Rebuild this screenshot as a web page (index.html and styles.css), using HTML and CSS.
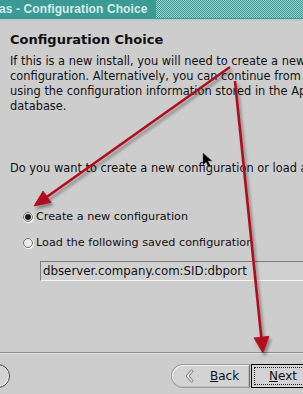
FILE: index.html
```html
<!DOCTYPE html>
<html>
<head>
<meta charset="utf-8">
<link rel="stylesheet" href="styles.css">
</head>
<body>
<div class="window">
  <div class="titlebar">
    <span class="title">as - Configuration Choice</span>
    <span class="grip"></span>
  </div>
  <div class="content">
    <h1 class="heading">Configuration Choice</h1>
    <p class="intro">If this is a new install, you will need to create a new<br>configuration. Alternatively, you can continue from a<br>using the configuration information stored in the Ap<br>database.</p>
    <p class="question">Do you want to create a new configuration or load a</p>
    <div class="options">
      <div class="option"><span class="radio checked"></span>Create a new configuration</div>
      <div class="option"><span class="radio"></span>Load the following saved configuration</div>
    </div>
    <div class="field">dbserver.company.com:SID:dbport</div>
  </div>
  <div class="footer">
    <div class="btn btn-left"></div>
    <div class="spacer"></div>
    <div class="btn btn-back">
      <svg class="chev" width="9" height="14" viewBox="0 0 9 14"><path d="M6.5 0.8 L8.2 2.2 L4.2 7 L8.2 11.8 L6.5 13.2 L1 7 Z" fill="#e6e6e6" stroke="#7a7a7a" stroke-width="1" stroke-linejoin="round"/></svg>
      <span class="label"><u>B</u>ack</span>
    </div>
    <div class="btn btn-next"><span class="focus"><span class="label"><u>N</u>ext</span></span></div>
  </div>
  <svg class="overlay" width="303" height="394" viewBox="0 0 303 394">
    <defs>
      <filter id="sh" x="-20%" y="-20%" width="140%" height="140%">
        <feDropShadow dx="2" dy="3" stdDeviation="1.6" flood-color="#000" flood-opacity="0.35"/>
      </filter>
    </defs>
    <g filter="url(#sh)" fill="#b2101c" stroke="#b2101c">
      <line x1="230" y1="67" x2="46" y2="197.5" stroke-width="2.6"/>
      <polygon points="34,206 51.1,202.4 43,191" stroke-width="0.8"/>
      <line x1="235" y1="81" x2="261.4" y2="338" stroke-width="2.6"/>
      <polygon points="263,353 269,336.3 254,337.9" stroke-width="0.8"/>
    </g>
    <path d="M203 153 L203 165 L206 162 L208.5 167 L210.5 166 L208 161 L212 161 Z" fill="#000" stroke="#555" stroke-width="0.4"/>
  </svg>
</div>
</body>
</html>
```
FILE: styles.css
```css
html, body {
  margin: 0;
  padding: 0;
}
body {
  width: 303px;
  height: 394px;
  overflow: hidden;
  background: #cdcdcd;
  font-family: "DejaVu Sans", sans-serif;
}
.window {
  position: relative;
  width: 303px;
  height: 394px;
  overflow: hidden;
  display: flex;
  flex-direction: column;
  background: #cdcdcd;
}
.titlebar {
  height: 19px;
  background: #3c9a95;
  display: flex;
  align-items: stretch;
  border-bottom: 2px solid #b9c9c8;
  flex-shrink: 0;
}
.title {
  font-family: "Liberation Sans", sans-serif;
  font-weight: bold;
  font-size: 12px;
  line-height: 19px;
  color: #d4ecea;
  white-space: nowrap;
  margin-left: -1px;
  letter-spacing: 0.1px;
}
.grip {
  flex: 1;
  margin: 0 0 1px 8px;
  background: repeating-conic-gradient(#9fd0cc 0 25%, #3c9a95 0 50%) 0 0 / 2px 2px;
}
.content {
  flex: 1;
  padding: 11px 0 0 10px;
  white-space: nowrap;
  color: #111;
  font-size: 11.4px;
}
.heading {
  margin: 0;
  font-size: 13px;
  line-height: 16px;
  font-weight: bold;
  color: #111;
}
.intro {
  margin: 6px 0 0;
  line-height: 15px;
}
.question {
  margin: 47px 0 0;
  line-height: 15px;
}
.options {
  margin-top: 33px;
  padding-left: 13px;
  display: flex;
  flex-direction: column;
  gap: 11px;
  font-size: 11.2px;
}
.option {
  display: flex;
  align-items: center;
  height: 15px;
  line-height: 15px;
}
.radio {
  width: 10px;
  height: 10px;
  border-radius: 50%;
  box-sizing: border-box;
  border: 1px solid #6a6a6a;
  background: #ececec;
  box-shadow: 0.5px 0.5px 0 0.5px #ffffff;
  margin-right: 3px;
  display: flex;
  align-items: center;
  justify-content: center;
}
.radio.checked::after {
  content: "";
  width: 6px;
  height: 6px;
  border-radius: 50%;
  background: #1a1a1a;
}
.field {
  margin: 11px 0 0 30px;
  height: 18px;
  border-top: 1px solid #7c7c7c;
  border-left: 1px solid #7c7c7c;
  border-bottom: 1px solid #f4f4f4;
  background: #d0d0d0;
  padding-left: 2px;
  font-size: 11.8px;
  line-height: 18px;
  color: #111;
}
.footer {
  flex-shrink: 0;
  border-top: 1px solid #8e8e8e;
  box-shadow: inset 0 1px 0 #e2e2e2;
  display: flex;
  align-items: flex-start;
  padding-top: 11px;
  box-sizing: border-box;
  height: 42px;
}
.spacer {
  flex: 1;
}
.btn {
  height: 24px;
  box-sizing: border-box;
  background: #d3d3d3;
  display: flex;
  align-items: center;
  font-size: 12px;
  color: #111;
  flex-shrink: 0;
}
.btn-left {
  width: 31px;
  margin-left: -21px;
  border: 1px solid #4a4a4a;
  border-radius: 0 12px 12px 0;
  box-shadow: inset -1px -1px 0 #eeeeee;
}
.btn-back {
  width: 79px;
  border: 1px solid #9a9a9a;
  border-right-color: #6c6c6c;
  border-radius: 12px 0 0 12px;
  box-shadow: inset 1px 1px 0 #f6f6f6, inset -1px -1px 0 #bdbdbd;
  padding-left: 13px;
}
.chev {
  display: block;
}
.btn-back .label {
  margin-left: 16px;
}
.btn-next {
  width: 60px;
  margin-left: 1px;
  margin-right: -8px;
  border: 1px solid #000;
  padding: 2px;
}
.focus {
  flex: 1;
  align-self: stretch;
  border: 1px dotted #222;
  display: flex;
  align-items: center;
  padding-left: 14px;
}
.label u {
  text-decoration: underline;
  text-underline-offset: 1px;
}
.overlay {
  position: absolute;
  left: 0;
  top: 0;
  pointer-events: none;
}
```
